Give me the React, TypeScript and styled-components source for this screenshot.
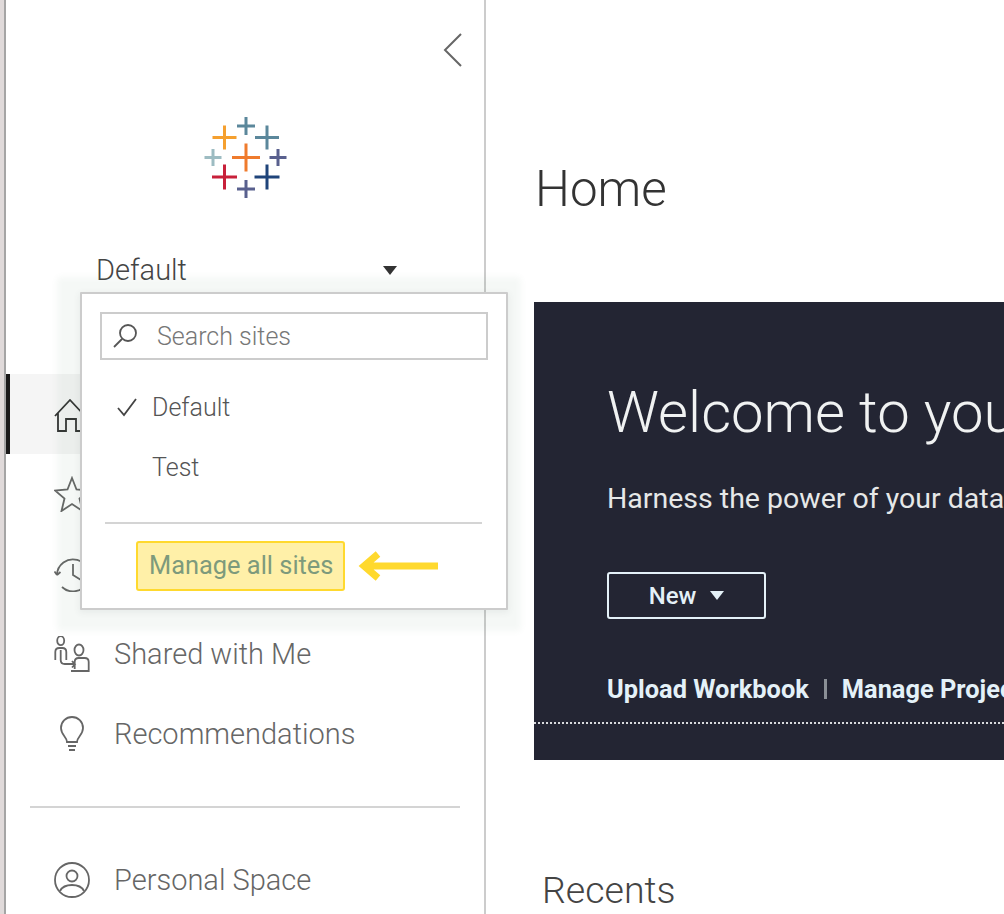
import styled, { createGlobalStyle } from 'styled-components';

const Global = createGlobalStyle`
  html, body {
    margin: 0;
    padding: 0;
    height: 100%;
    overflow: hidden;
    background: #fff;
  }
  body {
    font-family: Roboto, "Liberation Sans", sans-serif;
    color: #333;
  }
`;

const Shell = styled.div`
  position: relative;
  display: flex;
  width: 1004px;
  height: 914px;
  overflow: hidden;
  background: #fff;
`;

const WindowEdge = styled.div`
  flex: none;
  width: 4px;
  background: #e0dada;
  border-right: 2px solid #a5a5a5;
`;

const Sidebar = styled.aside`
  flex: none;
  display: flex;
  flex-direction: column;
  width: 478px;
  border-right: 2px solid #ccc;

  & > * {
    flex: none;
  }
`;

const CollapseRow = styled.div`
  display: flex;
  align-items: center;
  justify-content: flex-end;
  height: 100px;
  padding-right: 21px;
`;

const LogoRow = styled.div`
  display: flex;
  align-items: center;
  justify-content: center;
  height: 113px;
  margin-left: 2px;
`;

const SiteRow = styled.div`
  display: flex;
  align-items: center;
  justify-content: space-between;
  height: 40px;
  margin: 37px 0 84px;
  padding: 0 87px 0 90px;
  font-size: 29px;
  font-weight: 300;
  color: #444;
`;

const Caret = styled.span<{ $color?: string }>`
  width: 0;
  height: 0;
  border-left: 7px solid transparent;
  border-right: 7px solid transparent;
  border-top: 9px solid ${(p) => p.$color ?? '#333'};
`;

const NavItem = styled.div<{ $active?: boolean }>`
  display: flex;
  align-items: center;
  gap: 24px;
  height: 80px;
  box-sizing: border-box;
  padding-left: ${(p) => (p.$active ? '44px' : '48px')};
  border-left: ${(p) => (p.$active ? '4px solid #1a1a1a' : 'none')};
  background: ${(p) => (p.$active ? '#f5f5f5' : 'transparent')};
  font-size: 29px;
  font-weight: 300;
  color: #666;
`;

const NavIcon = styled.svg`
  flex: none;
  width: 36px;
  height: 36px;
  fill: none;
  stroke: #666;
  stroke-width: 1.8;
`;

const SideDivider = styled.div`
  height: 2px;
  margin: 32px 24px 0;
  background: #d4d4d4;
`;

const SpaceGroup = styled.div`
  margin-top: 32px;
`;

const Main = styled.main`
  flex: 1;
  min-width: 0;
  padding-left: 48px;
`;

const PageTitle = styled.h1`
  margin: 0;
  padding: 159px 0 83px 1px;
  font-size: 49.300px;
  line-height: 60px;
  font-weight: 300;
  color: #333;
`;

const Hero = styled.section`
  position: relative;
  box-sizing: border-box;
  height: 458px;
  padding: 74px 0 0 73px;
  background: #232533;
  color: #f0f2f2;
  white-space: nowrap;
  overflow: hidden;
`;

const HeroTitle = styled.h2`
  margin: 0;
  font-size: 58px;
  line-height: 72px;
  font-weight: 300;
`;

const HeroText = styled.p`
  margin: 33px 0 0;
  font-size: 28.5px;
  line-height: 36px;
  font-weight: 400;
  color: #e6e8e8;
`;

const NewButton = styled.button`
  display: flex;
  align-items: center;
  justify-content: center;
  gap: 14px;
  box-sizing: border-box;
  width: 159px;
  height: 47px;
  margin: 55px 0 0;
  padding: 0;
  background: transparent;
  border: 2px solid #e4f1f8;
  border-radius: 3px;
  color: #e4f1f8;
  font-family: inherit;
  font-size: 24px;
  font-weight: 500;
`;

const LinkRow = styled.div`
  display: flex;
  align-items: center;
  gap: 15px;
  margin-top: 52px;
  font-size: 25.4px;
  line-height: 36px;
  font-weight: 700;
  color: #e4f1f8;
`;

const LinkBar = styled.span`
  flex: none;
  width: 3px;
  height: 20px;
  background: #8a8f96;
`;

const HeroRule = styled.div`
  position: absolute;
  left: 0;
  right: 0;
  bottom: 36px;
  border-top: 2px dotted #d8dadd;
`;

const SectionTitle = styled.h3`
  margin: 107px 0 0 8px;
  font-size: 37.500px;
  line-height: 46px;
  font-weight: 300;
  color: #444;
`;

const SiteMenu = styled.div`
  position: absolute;
  left: 80px;
  top: 292px;
  box-sizing: border-box;
  width: 428px;
  height: 318px;
  padding: 18px 18px 0;
  background: #fff;
  border: 2px solid #ccc;
  border-radius: 1px;
  box-shadow: 0 2px 6px 1px rgba(70, 90, 80, 0.07), -5px 3px 6px 18px rgba(90, 130, 105, 0.06);
`;

const SearchBox = styled.div`
  display: flex;
  align-items: center;
  gap: 19px;
  box-sizing: border-box;
  height: 48px;
  padding-left: 10px;
  border: 2px solid #ccc;
  font-size: 25px;
  font-weight: 300;
  color: #777;
`;

const SearchIcon = styled.svg`
  flex: none;
  width: 26px;
  height: 26px;
  fill: none;
  stroke: #555;
  stroke-width: 1.8;
`;

const MenuList = styled.div`
  margin-top: 17px;
`;

const MenuItem = styled.div`
  display: flex;
  align-items: center;
  height: 60px;
  padding-left: 16px;
  font-size: 25px;
  font-weight: 300;
  color: #555;
`;

const CheckCell = styled.span`
  display: flex;
  align-items: center;
  width: 36px;
`;

const CheckIcon = styled.svg`
  width: 22px;
  height: 22px;
  fill: none;
  stroke: #444;
  stroke-width: 1.8;
`;

const MenuDivider = styled.div`
  height: 2px;
  margin: 25px 6px 0 5px;
  background: #d4d4d4;
`;

const ManageRow = styled.div`
  display: flex;
  align-items: center;
  gap: 13px;
  margin: 17px 0 0 36px;
`;

const ManageButton = styled.div`
  display: flex;
  align-items: center;
  box-sizing: border-box;
  width: 209px;
  height: 50px;
  padding: 0 0 2px 11px;
  background: #fff0a8;
  border: 2px solid #ffd92e;
  border-radius: 3px;
  font-size: 25.4px;
  font-weight: 400;
  color: #7d9a7c;
`;

const ArrowIcon = styled.svg`
  flex: none;
  width: 80px;
  height: 34px;
  fill: none;
  stroke: #ffd92e;
  stroke-width: 7;
`;

const crosses = [
  { x: 46, y: 15, r: 9, c: '#5b879b' },
  { x: 24.5, y: 26.5, r: 12, c: '#f5a02f' },
  { x: 67, y: 26.5, r: 12, c: '#5b879b' },
  { x: 13, y: 46.5, r: 8.5, c: '#9dbcc2' },
  { x: 46, y: 46.5, r: 14, c: '#ef7b2d' },
  { x: 78, y: 46.5, r: 8.5, c: '#59608e' },
  { x: 24.5, y: 66, r: 12.5, c: '#c8203a' },
  { x: 67, y: 66, r: 12.5, c: '#1f447a' },
  { x: 46, y: 78, r: 9, c: '#59608e' },
];

function TableauLogo() {
  return (
    <svg width="92" height="92" viewBox="0 0 92 92" fill="none" strokeWidth="3">
      {crosses.map((m) => (
        <path
          key={`${m.x}-${m.y}`}
          d={`M${m.x - m.r} ${m.y}H${m.x + m.r}M${m.x} ${m.y - m.r}V${m.y + m.r}`}
          stroke={m.c}
        />
      ))}
    </svg>
  );
}

export default function App() {
  return (
    <Shell>
      <Global />
      <WindowEdge />
      <Sidebar>
        <CollapseRow>
          <svg width="20" height="34" viewBox="0 0 20 34" fill="none" stroke="#666" strokeWidth="2">
            <path d="M18 1 2 17l16 16" />
          </svg>
        </CollapseRow>
        <LogoRow>
          <TableauLogo />
        </LogoRow>
        <SiteRow>
          <span>Default</span>
          <Caret />
        </SiteRow>
        <NavItem $active>
          <NavIcon viewBox="0 0 36 36">
            <path d="M1 20 16 4l15 16M4 17v18h8V23h10v12h7V17" stroke="#333" />
          </NavIcon>
          <span>Home</span>
        </NavItem>
        <NavItem>
          <NavIcon viewBox="0 0 36 36">
            <path d="m18 2 4.500 11.500L35 14.500l-9.500 8L28.500 35 18 28 7.500 35l3-12.500-9.500-8 12.500-1z" />
          </NavIcon>
          <span>Favorites</span>
        </NavItem>
        <NavItem>
          <NavIcon viewBox="0 0 36 36">
            <path d="M3 19a16 16 0 1 1 5 12M3 19l-2.500-3.500M3 19l3.500-3M19 8v11l8 5" />
          </NavIcon>
          <span>Recents</span>
        </NavItem>
        <NavItem>
          <NavIcon viewBox="0 0 36 36">
            <ellipse cx="6.700" cy="4.700" rx="3.500" ry="4.500" />
            <ellipse cx="25" cy="14" rx="4.500" ry="5.500" />
            <path d="M1.300 24v-8q0-4 4-4h3q4 0 4 4v8M6.700 14v10q0 4 4 4h10M18 25l3 3.300-3 3.200M20.700 33v-7q0-4 4-4h6q4 0 4 4v9H17" />
          </NavIcon>
          <span>Shared with Me</span>
        </NavItem>
        <NavItem>
          <NavIcon viewBox="0 0 36 36">
            <path d="M13 26c0-5-6-7-6-14a11 11 0 0 1 22 0c0 7-6 9-6 14zM14 30h8M15 34h6" />
          </NavIcon>
          <span>Recommendations</span>
        </NavItem>
        <SideDivider />
        <SpaceGroup>
          <NavItem>
            <NavIcon viewBox="0 0 36 36">
              <circle cx="18" cy="18" r="17" />
              <circle cx="18" cy="14" r="5.500" />
              <path d="M6 29c2-4 7-6 12-6s10 2 12 6" />
            </NavIcon>
            <span>Personal Space</span>
          </NavItem>
        </SpaceGroup>
      </Sidebar>
      <Main>
        <PageTitle>Home</PageTitle>
        <Hero>
          <HeroTitle>Welcome to your Tableau site</HeroTitle>
          <HeroText>Harness the power of your data. Get started below.</HeroText>
          <NewButton>
            New
            <Caret $color="#e4f1f8" />
          </NewButton>
          <LinkRow>
            <span>Upload Workbook</span>
            <LinkBar />
            <span>Manage Projects</span>
          </LinkRow>
          <HeroRule />
        </Hero>
        <SectionTitle>Recents</SectionTitle>
      </Main>
      <SiteMenu>
        <SearchBox>
          <SearchIcon viewBox="0 0 26 26">
            <circle cx="16" cy="10" r="8" />
            <path d="M10 16 2 24" />
          </SearchIcon>
          <span>Search sites</span>
        </SearchBox>
        <MenuList>
          <MenuItem>
            <CheckCell>
              <CheckIcon viewBox="0 0 22 22">
                <path d="m2 12 6 7L20 3" />
              </CheckIcon>
            </CheckCell>
            Default
          </MenuItem>
          <MenuItem>
            <CheckCell />
            Test
          </MenuItem>
        </MenuList>
        <MenuDivider />
        <ManageRow>
          <ManageButton>Manage all sites</ManageButton>
          <ArrowIcon viewBox="0 0 80 34">
            <path d="M80 17H8M20 5 6 17l14 12" />
          </ArrowIcon>
        </ManageRow>
      </SiteMenu>
    </Shell>
  );
}
